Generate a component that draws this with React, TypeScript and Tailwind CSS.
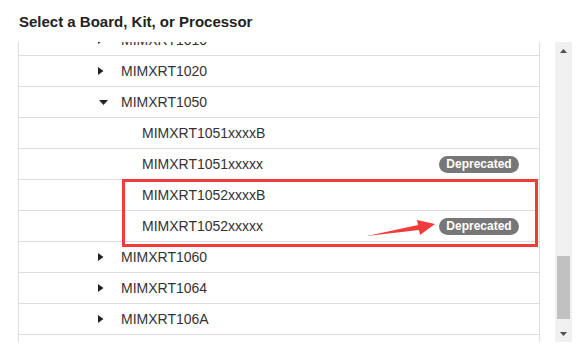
import React from "react"

type Row = { label: string; level: 0 | 1; caret?: "right" | "down"; deprecated?: boolean }

const rows: Row[] = [
  { label: "MIMXRT1010", level: 0, caret: "right" },
  { label: "MIMXRT1020", level: 0, caret: "right" },
  { label: "MIMXRT1050", level: 0, caret: "down" },
  { label: "MIMXRT1051xxxxB", level: 1 },
  { label: "MIMXRT1051xxxxx", level: 1, deprecated: true },
  { label: "MIMXRT1052xxxxB", level: 1 },
  { label: "MIMXRT1052xxxxx", level: 1, deprecated: true },
  { label: "MIMXRT1060", level: 0, caret: "right" },
  { label: "MIMXRT1064", level: 0, caret: "right" },
  { label: "MIMXRT106A", level: 0, caret: "right" },
]

const Caret = ({ dir }: { dir: "right" | "down" }) =>
  dir === "right" ? (
    <svg width="6" height="8" viewBox="0 0 6 8" className="block">
      <polygon points="0,0 5.5,4 0,8" fill="#222" />
    </svg>
  ) : (
    <svg width="9" height="5" viewBox="0 0 9 5" className="block ml-[1px]">
      <polygon points="0,0 9,0 4.5,5" fill="#222" />
    </svg>
  )

const TreeRow = ({ row }: { row: Row }) => (
  <div className="h-[31px] border-b border-[#dddddd] flex items-center pr-[20px]">
    {row.level === 0 ? (
      <div className="flex items-center pl-[79px]">
        <div className="w-[23px] flex items-center">{row.caret && <Caret dir={row.caret} />}</div>
        <span>{row.label}</span>
      </div>
    ) : (
      <span className="pl-[123px]">{row.label}</span>
    )}
    {row.deprecated && (
      <span className="ml-auto w-[80px] h-[17px] rounded-full bg-[#777777] text-white text-[12px] font-bold leading-[17px] text-center">
        Deprecated
      </span>
    )}
  </div>
)

export default function App() {
  return (
    <div className="w-[580px] h-[363px] bg-white overflow-hidden text-[#333333] font-['Liberation_Sans',Arial,sans-serif]">
      <div className="pt-[12px] pl-[19px] text-[15px] leading-[20px] font-bold text-[#222222]">
        Select a Board, Kit, or Processor
      </div>

      <div className="mt-[10px] ml-[18px] flex gap-[15px] h-[300px]">
        {/* tree list, scrolled so the first row is half hidden */}
        <div className="relative w-[522px] h-full overflow-hidden border-x border-[#dddddd]">
          <div className="-mt-[17px] text-[14px]">
            {rows.map((r) => (
              <TreeRow key={r.label} row={r} />
            ))}
          </div>

          {/* annotation box + arrow */}
          <div className="absolute left-[103px] top-[137px] w-[416px] h-[68px] border-[3px] border-[#f03c3c]" />
          <svg className="absolute left-[348px] top-[177px]" width="70" height="18" viewBox="0 0 70 18">
            <polygon points="0,17 51,6 50,1 68,5 53,16 52,11" fill="#f03c3c" />
          </svg>
        </div>

        {/* scrollbar */}
        <div className="w-[17px] h-full bg-[#f0f0f0] flex flex-col items-center">
          <div className="h-[17px] w-full flex items-center justify-center">
            <svg width="7" height="4" viewBox="0 0 7 4" className="block">
              <polygon points="0,4 3.5,0 7,4" fill="#505050" />
            </svg>
          </div>
          <div className="flex-1 w-full flex flex-col px-[2px]">
            <div className="h-[197px]" />
            <div className="h-[63px] bg-[#c1c1c1]" />
          </div>
          <div className="h-[17px] w-full flex items-center justify-center">
            <svg width="7" height="4" viewBox="0 0 7 4" className="block">
              <polygon points="0,0 7,0 3.5,4" fill="#505050" />
            </svg>
          </div>
        </div>
      </div>
    </div>
  )
}
